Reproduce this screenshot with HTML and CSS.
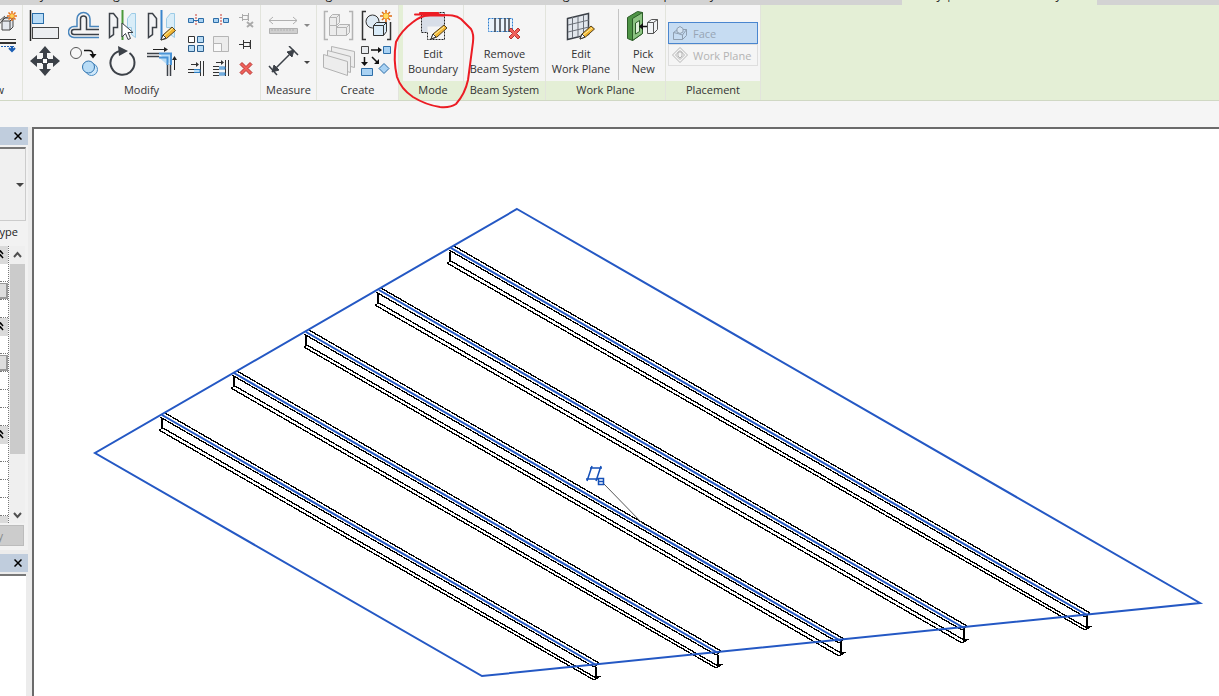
FILE: index.html
```html
<!DOCTYPE html>
<html lang="en">
<head>
    <meta charset="UTF-8">
    <meta name="viewport" content="width=device-width, initial-scale=1.0">
    <title>Modify | Structural Beam Systems</title>
    <link rel="stylesheet" href="styles.css">
</head>
<body>
    <!-- Ribbon tabs -->
    <nav class="tabs">
        <a href="#">Analyze</a>
        <a href="#">Massing &amp; Site</a>
        <a href="#">Collaborate</a>
        <a href="#">View</a>
        <a href="#">Manage</a>
        <a href="#">Add-Ins</a>
        <a href="#">Autodesk Tools</a>
        <a href="#">Site Designer</a>
        <a href="#">BIM Interoperability Tools</a>
        <a href="#" class="active">Modify | Structural Beam Systems</a>
    </nav>

    <!-- Ribbon -->
    <div class="ribbon">
        <section class="panel panel-view">
            <div class="panel-body">
                <div class="stack">
                    <button class="tool" aria-label="Override graphics">
                        <svg width="32" height="32" viewBox="0 0 32 32" fill="none">
                            <path d="M14 17l6-8 4-1M15 12l6-5" stroke="#555"/>
                            <path d="M18 12h8v9h-8zM26 12l3-3v9l-3 3M18 12l3-3h8" fill="#e4e8ee" stroke="#444"/>
                            <path d="M28 2v10M23 7h10M24.500 3.500l7 7M31.500 3.500l-7 7" stroke="#e8731a" stroke-width="1.500"/>
                            <circle cx="28" cy="7" r="2" fill="#ffd257"/>
                        </svg>
                    </button>
                    <button class="tool" aria-label="Linework">
                        <svg width="32" height="32" viewBox="0 0 32 32" fill="none">
                            <path d="M14 -6.500h18" stroke="#333"/>
                            <path d="M14 -3h18" stroke="#333" stroke-width="2"/>
                            <path d="M14 .5h16" stroke="#1c5fb5" stroke-dasharray="2 1"/>
                            <path d="M28 0v4M25 2l3 3 3-3" stroke="#1c5fb5" stroke-width="2"/>
                        </svg>
                    </button>
                </div>
            </div>
            <h2 class="panel-title">View</h2>
        </section>

        <section class="panel panel-modify">
            <div class="panel-body">
                <div class="tool-grid">
                    <button class="tool" aria-label="Align">
                        <svg width="32" height="32" viewBox="0 0 32 32" fill="none">
                            <path d="M1.500 1v31" stroke="#222" stroke-width="1.500"/>
                            <rect x="3.500" y="4.500" width="11" height="10" fill="#b9dcf7" stroke="#2a6da8"/>
                            <rect x="3.500" y="18.500" width="26" height="11" fill="#eceef1" stroke="#444"/>
                        </svg>
                    </button>
                    <button class="tool" aria-label="Offset">
                        <svg width="32" height="32" viewBox="0 0 32 32" fill="none">
                            <path d="M31 20.500H18.500V10a3 3 0 0 0-6 0v10.500H6a2.500 2.500 0 0 0 0 5h25" stroke="#3c4148" stroke-width="1.500"/>
                            <path d="M31 17.500H22V10a6.500 6.500 0 0 0-13 0v7.500H6a5.500 5.500 0 0 0 0 11h25" stroke="#4a86bd" stroke-width="1.500"/>
                        </svg>
                    </button>
                    <button class="tool" aria-label="Mirror - Pick Axis">
                        <svg width="32" height="32" viewBox="0 0 32 32" fill="none">
                            <path d="M2.500 4.500h4l4 5v9h-4v7l-4 3z" fill="#f3f4f6" stroke="#3c4148" stroke-width="1.500"/>
                            <path d="M28.500 4.500h-4l-4 5v9h4v7l4 3z" fill="#d9edf8" stroke="#9ccbe6"/>
                            <path d="M15.500 1v30" stroke="#4d9a3a" stroke-width="2"/>
                            <path d="M15 14v14l3.500-3.500 2.500 6 2.500-1-2.500-6h5z" fill="#fff" stroke="#3c4148"/>
                        </svg>
                    </button>
                    <button class="tool" aria-label="Mirror - Draw Axis">
                        <svg width="32" height="32" viewBox="0 0 32 32" fill="none">
                            <path d="M2.500 4.500h4l4 5v9h-4v7l-4 3z" fill="#f3f4f6" stroke="#3c4148" stroke-width="1.500"/>
                            <path d="M28.500 4.500h-4l-4 5v9h4v7l4 3z" fill="#d9edf8" stroke="#9ccbe6"/>
                            <path d="M15.500 1v30" stroke="#3a85cc" stroke-width="2"/>
                            <path d="M15 31l2-5 9-8 3.500 3.500-9 8z" fill="#f2b632" stroke="#53411f"/>
                            <path d="M15 31l2-5 3 3z" fill="#fff" stroke="#333"/>
                            <path d="M18 27l9-8" stroke="#fff2a8"/>
                        </svg>
                    </button>
                    <button class="tool" aria-label="Move">
                        <svg width="32" height="32" viewBox="0 0 32 32" fill="#3c4148">
                            <path d="M16 0l6 7h-4v5h-4V7h-4zM16 30l6-7h-4v-5h-4v5h-4zM1 15l7-6v4h5v4H8v4zM31 15l-7-6v4h-5v4h5v4z"/>
                            <rect x="13.500" y="12.500" width="5" height="5" fill="#fff" stroke="#3c4148"/>
                        </svg>
                    </button>
                    <button class="tool" aria-label="Copy">
                        <svg width="32" height="32" viewBox="0 0 32 32" fill="none">
                            <circle cx="8" cy="7" r="5.500" fill="#f7f7f7" stroke="#555"/>
                            <path d="M16 4.500h5q4 0 4 5" stroke="#111" stroke-width="1.500"/>
                            <path d="M21.500 8h7L25 12.500z" fill="#111"/>
                            <circle cx="23.500" cy="23.500" r="6" fill="#cfe8fa" stroke="#4c8dc4"/>
                            <circle cx="20.500" cy="21" r="6" fill="#b8dcf6" stroke="#2f72ad"/>
                        </svg>
                    </button>
                    <button class="tool" aria-label="Rotate">
                        <svg width="32" height="32" viewBox="0 0 32 32" fill="none">
                            <path d="M13 5a12 12 0 1 0 9.500 2" stroke="#3c4148" stroke-width="2"/>
                            <path d="M11 0l10 5-9 5z" fill="#3c4148"/>
                        </svg>
                    </button>
                    <button class="tool" aria-label="Trim/Extend to Corner">
                        <svg width="32" height="32" viewBox="0 0 32 32" fill="none">
                            <path d="M1 7.500h12M1 10.500h12M21.500 18v12M24.500 18v12" stroke="#3c4148" stroke-width="1.500"/>
                            <path d="M13 7.500h12V19M13 11.500h8.500V19" fill="#b8dcf6" stroke="#4a94d6" stroke-width="2"/>
                            <path d="M7 3.500h13M28.500 24V12" stroke="#222"/>
                            <path d="M18 1l4 2.500L18 6zM26 14l2.500-4 2.500 4z" fill="#222"/>
                        </svg>
                    </button>
                </div>
                <div class="small-grid">
                    <button class="tool-sm" aria-label="Split Element">
                        <svg width="16" height="16" viewBox="0 0 16 16" fill="none">
                            <path d="M.5 6.500h5v4h-5zM10.500 6.500h5v4h-5z" fill="#a9d2f3" stroke="#2d6ea8"/>
                            <path d="M8 2v12" stroke="#c83c33" stroke-dasharray="2 1"/>
                            <path d="M5 8.500h6" stroke="#2d6ea8"/>
                        </svg>
                    </button>
                    <button class="tool-sm" aria-label="Split with Gap">
                        <svg width="16" height="16" viewBox="0 0 16 16" fill="none">
                            <path d="M.5 6.500h5v4h-5zM10.500 6.500h5v4h-5z" fill="#a9d2f3" stroke="#2d6ea8"/>
                            <path d="M8 2v12" stroke="#c83c33" stroke-dasharray="2 1"/>
                        </svg>
                    </button>
                    <button class="tool-sm" aria-label="Unpin" disabled>
                        <svg width="16" height="16" viewBox="0 0 16 16" fill="none" stroke="#aaa">
                            <path d="M1 5.500h3M4.500 2v7M5 3.500h5v4H5M10.500 1v8"/>
                            <path d="M9 10l6 5M15 10l-6 5" stroke-width="2"/>
                        </svg>
                    </button>
                    <button class="tool-sm" aria-label="Array">
                        <svg width="16" height="16" viewBox="0 0 16 16" fill="#b8dcf6" stroke="#2d5f8c">
                            <path d="M.5.5h6v6h-6z" fill="#fff" stroke="#333"/>
                            <path d="M9.500.5h6v6h-6zM.5 9.500h6v6h-6zM9.500 9.500h6v6h-6z"/>
                        </svg>
                    </button>
                    <button class="tool-sm" aria-label="Scale" disabled>
                        <svg width="16" height="16" viewBox="0 0 16 16" fill="#ececec" stroke="#b5b5b5">
                            <path d="M.5.5h15v15H.5z"/>
                            <path d="M.5 7.500h8v8h-8z" fill="#f9f9f9"/>
                        </svg>
                    </button>
                    <button class="tool-sm" aria-label="Pin">
                        <svg width="16" height="16" viewBox="0 0 16 16" fill="none" stroke="#333">
                            <path d="M1 8.500h4M5.500 4v9M6 6.500h6v4H6M12.500 4v9"/>
                        </svg>
                    </button>
                    <button class="tool-sm" aria-label="Trim/Extend Single Element">
                        <svg width="16" height="16" viewBox="0 0 16 16" fill="none">
                            <path d="M12.500 1v15M15.500 1v15M0 9.500h6M0 12.500h6M3 4.500h6" stroke="#333"/>
                            <path d="M6 9.500h6v3H6" fill="#b8dcf6" stroke="#2f7fc4"/>
                            <path d="M8 2l3 2.500L8 7z" fill="#333"/>
                        </svg>
                    </button>
                    <button class="tool-sm" aria-label="Trim/Extend Multiple Elements">
                        <svg width="16" height="16" viewBox="0 0 16 16" fill="none">
                            <path d="M12.500 0v16M15.500 0v16M0 6.500h6M0 9.500h6M0 12.500h6M0 15.500h6M3 2.500h6" stroke="#333"/>
                            <path d="M6 7h6v2H6M6 13h6v2H6" fill="#b8dcf6" stroke="#2f7fc4"/>
                            <path d="M8 0l3 2.500L8 5z" fill="#333"/>
                        </svg>
                    </button>
                    <button class="tool-sm" aria-label="Delete">
                        <svg width="16" height="16" viewBox="0 0 16 16">
                            <path d="M2 4.500l2-2 4 4 4-4 2 2-4 4 4 4-2 2-4-4-4 4-2-2 4-4z" fill="#f0605a" stroke="#b8322e"/>
                        </svg>
                    </button>
                </div>
            </div>
            <h2 class="panel-title">Modify</h2>
        </section>

        <section class="panel panel-measure">
            <div class="panel-body">
                <div class="stack">
                    <button class="tool tool-drop" aria-label="Measure" disabled>
                        <svg width="32" height="32" viewBox="0 0 32 32" fill="none" stroke="#b0b0b0">
                            <path d="M2 11.500h28M6 8l-4 3.500L6 15M26 8l4 3.500-4 3.500"/>
                            <path d="M2.500 19.500h28v5h-28z" fill="#cfcfcf"/>
                            <path d="M5 20v2M8 20v2M11 20v2M14 20v2M17 20v2M20 20v2M23 20v2M26 20v2"/>
                        </svg>
                        <span class="caret"></span>
                    </button>
                    <button class="tool tool-drop" aria-label="Aligned Dimension">
                        <svg width="32" height="32" viewBox="0 0 32 32" fill="none" stroke="#3c4148">
                            <path d="M6 25L26 5M2 20l8 9M22 0l9 9" stroke-width="1.500"/>
                            <path d="M5 26l2-7 5 5zM27 4l-2 7-5-5z" fill="#3c4148"/>
                        </svg>
                        <span class="caret"></span>
                    </button>
                </div>
            </div>
            <h2 class="panel-title">Measure</h2>
        </section>

        <section class="panel panel-create">
            <div class="panel-body">
                <div class="tool-grid two">
                    <button class="tool" aria-label="Create Assembly" disabled>
                        <svg width="32" height="32" viewBox="0 0 32 32" fill="#ececec" stroke="#b3b3b3">
                            <path d="M5 2.500H1.500v28H5M26 2.500h3.500v28H26" fill="none" stroke-width="1.500"/>
                            <path d="M6.500 8.500l3-3h7v8l-3 3h-7zM6.500 16.500h7v10h-7zM13.500 18.500l3-3h10v8l-3 3h-10z"/>
                            <path d="M6.500 8.500h7v8M13.500 8.500l3-3M13.500 18.500h10v8M23.500 18.500l3-3" fill="none"/>
                        </svg>
                    </button>
                    <button class="tool" aria-label="Create Group">
                        <svg width="32" height="32" viewBox="0 0 32 32" fill="none" stroke="#333">
                            <path d="M5 2.500H1.500v28H5M26 30.500h3.500V13" stroke-width="1.500"/>
                            <circle cx="11.500" cy="12.500" r="6.500" fill="#dde9f3"/>
                            <path d="M12.500 16.500l3-3h10v9l-3 4h-10z" fill="#d9ebf8"/>
                            <path d="M12.500 16.500h10v10M22.500 16.500l3-3"/>
                            <path d="M25 1v12M19 7h12M21 3l8 8M29 3l-8 8" stroke="#df6b14" stroke-width="1.500"/>
                            <circle cx="25" cy="7" r="3" fill="#ffdc62" stroke="#f0972a"/>
                        </svg>
                    </button>
                    <button class="tool" aria-label="Create Parts" disabled>
                        <svg width="32" height="32" viewBox="0 0 32 32" fill="#ededed" stroke="#b3b3b3">
                            <path d="M8.500.5l23 5v16l-23-6z"/>
                            <path d="M4.500 4.500l23 6v16l-23-7z"/>
                            <path d="M.5 8.500l24 7v14l-24-8z"/>
                        </svg>
                    </button>
                    <button class="tool" aria-label="Create Similar">
                        <svg width="32" height="32" viewBox="0 0 32 32" fill="#a9d2f3" stroke="#2d6ea8">
                            <path d="M.5.500h7v7h-7z" fill="#e8ebee" stroke="#444"/>
                            <path d="M22.500.5h7v7h-7zM.5 22.500h11v7H.5zM23 17.500l5 5-5 5-5-5z"/>
                            <path d="M10 4h8M3.500 11v7M11 11l5 5" stroke="#111" stroke-width="1.500"/>
                            <path d="M17 1l4 3-4 3zM0 16h7l-3.500 4zM18 18v-5l-5 5z" fill="#111" stroke="none"/>
                        </svg>
                    </button>
                </div>
            </div>
            <h2 class="panel-title">Create</h2>
        </section>

        <!-- Contextual panels -->
        <div class="context">
            <section class="panel panel-mode">
                <div class="panel-body">
                    <button class="tool-lg">
                        <svg width="32" height="32" viewBox="0 0 32 32" fill="none">
                            <path d="M4.500 3.500h23v27h-17v-7h-6z" fill="#d8dee8"/>
                            <path d="M10.500 17.500h17v13h-17z" fill="#f5f5f5"/>
                            <path d="M4.500 3.500h23v27h-17v-7h-6z" stroke="#222" stroke-dasharray="2 1"/>
                            <path d="M14 30l2-5 11-9 3 3-10 9z" fill="#f2b632" stroke="#53411f"/>
                            <path d="M14 30l2-5 3 3z" fill="#fff" stroke="#333"/>
                            <path d="M17 26l10-8" stroke="#fff2a8"/>
                        </svg>
                        <span>Edit</span>
                        <span>Boundary</span>
                    </button>
                </div>
                <h2 class="panel-title">Mode</h2>
            </section>

            <section class="panel panel-beam">
                <div class="panel-body">
                    <button class="tool-lg">
                        <svg width="32" height="32" viewBox="0 0 32 32" fill="none">
                            <path d="M.5 9.500h24v13H.5z" fill="#eaf3fb" stroke="#2f7fd0" stroke-dasharray="2 1"/>
                            <path d="M7 9v14M12 9v14M17 9v14M21 9v14" stroke="#3c4148" stroke-width="1.500"/>
                            <path d="M21 21l2-2 3.500 3.500L30 19l2 2-3.500 3.500L32 28l-2 2-3.500-3.500L23 30l-2-2 3.500-3.500z" fill="#f0605a" stroke="#b8322e"/>
                        </svg>
                        <span>Remove</span>
                        <span>Beam System</span>
                    </button>
                </div>
                <h2 class="panel-title">Beam System</h2>
            </section>

            <section class="panel panel-plane">
                <div class="panel-body">
                    <button class="tool-lg">
                        <svg width="32" height="32" viewBox="0 0 32 32" fill="none">
                            <path d="M2.500 9.500l21-5v21l-21 5z" fill="#e1e6ec" stroke="#3c4148" stroke-width="1.500"/>
                            <path d="M7.500 8v21M13 7v21M18.500 6v21M3 16l21-5M3 23l21-5" stroke="#6b7078"/>
                            <path d="M15 30l2-5 9-8 3.500 3-9 8z" fill="#f2b632" stroke="#53411f"/>
                            <path d="M15 30l2-5 3 3z" fill="#fff" stroke="#333"/>
                            <path d="M18 26l9-7" stroke="#fff2a8"/>
                        </svg>
                        <span>Edit</span>
                        <span>Work Plane</span>
                    </button>
                    <span class="divider"></span>
                    <button class="tool-lg">
                        <svg width="32" height="32" viewBox="0 0 32 32" fill="none">
                            <path d="M.5 8.500l10-6 5 1v21l-10 7-5-2z" fill="#4e9446" stroke="#2c5c28"/>
                            <path d="M5.500 9.500l10-6v21l-10 7z" fill="#8cc382" stroke="#2c5c28"/>
                            <path d="M8.500 14l4-2.500v11L8.500 25z" fill="#dff0da" stroke="#2c5c28"/>
                            <path d="M13 17.500h7" stroke="#111" stroke-width="1.500"/>
                            <path d="M16 14l-4 3.500 4 3.500z" fill="#111"/>
                            <path d="M20.500 13.500l4-3h6v10l-4 4h-6z" fill="#f1f3f5" stroke="#555"/>
                            <path d="M20.500 13.500h6v11M26.500 13.500l4-3" stroke="#555"/>
                        </svg>
                        <span>Pick</span>
                        <span>New</span>
                    </button>
                </div>
                <h2 class="panel-title">Work Plane</h2>
            </section>

            <section class="panel panel-placement">
                <div class="panel-body">
                    <div class="placement">
                        <button class="option selected" disabled>
                            <svg width="16" height="16" viewBox="0 0 16 16" fill="none" stroke="#8f9fb0">
                                <path d="M1.500 7.500l4-3h9v6l-4 4h-9zM1.500 7.500q5 1 9 2.500v4.500M10.500 10l4-5.500"/>
                                <path d="M5 7V3.500l3-2 3 2V7L8 8.500z" fill="#d5e4f3"/>
                            </svg>
                            Face
                        </button>
                        <button class="option" disabled>
                            <svg width="16" height="16" viewBox="0 0 16 16" fill="none" stroke="#b5b5b5">
                                <path d="M8 .5L15.500 8 8 15.500.5 8z"/>
                                <path d="M8 3.500L12.500 8 8 12.500 3.500 8zM6 5h4v4L8 11 6 9z"/>
                            </svg>
                            Work Plane
                        </button>
                    </div>
                </div>
                <h2 class="panel-title">Placement</h2>
            </section>
        </div>

        <!-- Hand-drawn mark around Edit Boundary -->
        <svg class="redline" width="90" height="104" viewBox="390 8 90 104" fill="none" stroke="#ec1c24" stroke-width="2" stroke-linecap="round" stroke-linejoin="round">
            <path d="M415 14.500h25M420 13h18M424 15.500h20"/>
            <path d="M440 15C450 15 456 15 461 19L471 29Q474 34 473 42L470 65L468 80Q465 94 456 104Q450 108 440 107Q426 105 413 97Q401 89 397 77Q393 60 396 42Q401 31 413 22Q420 16 430 15"/>
        </svg>
    </div>

    <div class="options-bar"></div>

    <main class="workspace">
        <aside class="palettes">
            <!-- Properties -->
            <section class="properties">
                <div class="palette-title">
                    <button class="close" aria-label="Close Properties">
                        <svg width="8" height="8" viewBox="0 0 8 8" stroke="#000" stroke-width="1.500"><path d="M.5.5l7 7M7.500.5l-7 7"/></svg>
                    </button>
                </div>
                <button class="type-selector" aria-label="Type Selector"><span class="caret"></span></button>
                <div class="edit-type"><a href="#">Edit Type</a></div>
                <div class="property-list">
                    <div class="rows">
                        <div class="row head"><svg width="6" height="9" viewBox="0 0 6 9" fill="none" stroke="#000" stroke-width="1.500"><path d="M-2 4L.5 1 3 4M-2 8L.5 5 3 8"/></svg></div>
                        <div class="row"></div>
                        <div class="row"><span class="cell-button"></span></div>
                        <div class="row"></div>
                        <div class="row head"><svg width="6" height="9" viewBox="0 0 6 9" fill="none" stroke="#000" stroke-width="1.500"><path d="M-2 4L.5 1 3 4M-2 8L.5 5 3 8"/></svg></div>
                        <div class="row"></div>
                        <div class="row"><span class="cell-button"></span></div>
                        <div class="row"></div>
                        <div class="row"></div>
                        <div class="row"></div>
                        <div class="row head"><svg width="6" height="9" viewBox="0 0 6 9" fill="none" stroke="#000" stroke-width="1.500"><path d="M-2 4L.5 1 3 4M-2 8L.5 5 3 8"/></svg></div>
                        <div class="row"></div>
                        <div class="row"></div>
                        <div class="row"></div>
                        <div class="row"></div>
                        <div class="row head"></div>
                    </div>
                    <div class="scrollbar">
                        <svg width="15" height="18" viewBox="0 0 15 18" fill="none" stroke="#505050" stroke-width="2"><path d="M4 11l3.500-4 3.500 4"/></svg>
                        <div class="track"><div class="thumb"></div></div>
                        <svg width="15" height="18" viewBox="0 0 15 18" fill="none" stroke="#505050" stroke-width="2"><path d="M4 8l3.500 4L11 8"/></svg>
                    </div>
                </div>
                <button class="apply" disabled>Apply</button>
            </section>

            <!-- Project Browser -->
            <section class="browser">
                <div class="palette-title">
                    <button class="close" aria-label="Close Project Browser">
                        <svg width="8" height="8" viewBox="0 0 8 8" stroke="#000" stroke-width="1.500"><path d="M.5.5l7 7M7.500.5l-7 7"/></svg>
                    </button>
                </div>
                <div class="browser-tree"></div>
            </section>
        </aside>

        <!-- 3D view -->
        <div class="view">
            <svg class="model" viewBox="34 129 1185 567" fill="none">
                <g class="beam">
                    <path d="M454 246l636 367M449 250l636 367M447 263l638 367 5-3h-3M451 261l636 367M447 263l4-2M450 252v9M1087 616v12M1085 617l5-4"/>
                    <path d="M381 288l586 338M376 292l586 338M375 305l587 338 5-3h-3M379 303l585 337M375 305l4-2M378 294v9M964 629v12M962 630l5-4"/>
                    <path d="M309 330l535 309M304 334l535 309M304 347l535 309 5-3h-3M307 345l534 308M304 347l3-2M306 336v9M841 642v12M839 643l5-4"/>
                    <path d="M237 371l484 280M232 375l484 280M231 388l485 280 5-3h-3M235 386l483 280M231 388l4-2M234 377v9M718 655v11M716 655l5-4"/>
                    <path d="M165 413l434 250M160 417l434 250M159 430l435 250 5-3h-3M163 428l433 250M159 430l4-2M162 419v10M596 667v11M594 667l5-4"/>
                </g>
                <g class="centerline">
                    <path d="M451 248l636 367M379 290l585 338M306 332l535 309M234 373l484 280M162 415l434 250"/>
                </g>
                <path class="boundary" d="M517 209L1200 603 482 676 95 453z"/>
                <path class="leader" d="M604 484l39 40"/>
                <g class="tag">
                    <path d="M590 468h12M586 479h12M592 466l-5 15M601 466l-5 15"/>
                    <path d="M598.500 478.500h5v6h-5zM598 481.500h6"/>
                </g>
            </svg>
        </div>
    </main>
</body>
</html>
```
FILE: styles.css
```css
/* General */
* {
    box-sizing: border-box;
}

body {
    margin: 0;
    height: 100vh;
    display: flex;
    flex-direction: column;
    overflow: hidden;
    background-color: #f5f5f5;
    color: #333;
    font-family: "Open Sans", "Noto Sans", sans-serif;
    font-size: 11px;
    line-height: 15px;
}

button {
    padding: 0;
    border: 0;
    background: none;
    color: inherit;
    font: inherit;
}

svg {
    display: block;
    flex: none;
}

/* Tabs */
.tabs {
    display: flex;
    align-items: flex-end;
    flex: none;
    height: 5px;
    padding-left: 7px;
    overflow: hidden;
    background-color: #d3d3d3;
    font-size: 12px;
}

.tabs a {
    flex: none;
    padding: 0 8px 3px;
    color: #222;
    text-decoration: none;
}

.tabs .active {
    width: 195px;
    margin-left: auto;
    margin-right: 122px;
    padding: 0 0 3px;
    text-align: center;
    background-color: #e4efd6;
}

/* Ribbon */
.ribbon {
    position: relative;
    display: flex;
    flex: none;
    height: 96px;
    border-bottom: 1px solid #d0d8c4;
}

.panel {
    display: flex;
    flex-direction: column;
    flex: none;
    border-right: 1px solid #e2e4dc;
    background-color: #f5f5f5;
}

.panel-body {
    display: flex;
    flex: 1;
    padding-top: 4px;
}

.panel-title {
    margin: 0;
    height: 19px;
    font-size: 11px;
    font-weight: normal;
    line-height: 18px;
    text-align: center;
    white-space: nowrap;
}

.panel-view {
    width: 23px;
    align-items: flex-end;
    overflow: hidden;
}

.panel-view .panel-title {
    padding-right: 18px;
}

.panel-view .stack {
    margin-right: 6px;
}

.panel-view svg {
    overflow: visible;
}

.panel-modify {
    width: 238px;
}

.panel-modify .panel-body {
    gap: 10px;
    padding-left: 6px;
}

.panel-measure {
    width: 56px;
}

.panel-measure .panel-body {
    padding-left: 6px;
}

.panel-create {
    width: 82px;
}

.panel-create .panel-body {
    padding-left: 6px;
}

.stack {
    display: flex;
    flex-direction: column;
    gap: 5px;
}

.tool-grid {
    display: grid;
    grid-template-columns: repeat(4, 32px);
    grid-auto-rows: 32px;
    gap: 5px 7px;
}

.tool-grid.two {
    grid-template-columns: repeat(2, 32px);
    column-gap: 6px;
}

.small-grid {
    display: grid;
    grid-template-columns: repeat(3, 16px);
    grid-auto-rows: 16px;
    gap: 8px 9px;
    padding-top: 3px;
}

.tool-drop {
    display: flex;
    align-items: center;
    gap: 5px;
}

.caret {
    border: 3px solid transparent;
    border-top-color: #444;
    border-bottom: 0;
}

.tool-drop:disabled .caret {
    border-top-color: #888;
}

/* Contextual part of the ribbon */
.context {
    display: flex;
    flex: 1;
    padding-left: 4px;
    background-color: #e4efd6;
}

.context .panel-title {
    background-color: #e4efd6;
}

.context .panel-body {
    justify-content: center;
}

.panel-mode {
    width: 61px;
}

.panel-beam {
    width: 82px;
}

.panel-plane {
    width: 120px;
}

.panel-placement {
    width: 95px;
}

.tool-lg {
    display: flex;
    flex-direction: column;
    align-items: center;
    white-space: nowrap;
}

.tool-lg svg {
    margin-bottom: 5px;
}

.divider {
    width: 1px;
    height: 71px;
    margin: 0 8px;
    background-color: #c4c4c4;
}

.placement {
    width: 90px;
    padding-top: 13px;
}

.option {
    display: flex;
    align-items: center;
    gap: 5px;
    width: 100%;
    height: 22px;
    padding-left: 3px;
    border: 1px solid #dedede;
    color: #b3b3b3;
    white-space: nowrap;
}

.option.selected {
    border-color: #4a86cf;
    background-color: #c6dcf2;
    color: #97a5b5;
}

.redline {
    position: absolute;
    left: 390px;
    top: 3px;
    pointer-events: none;
}

.options-bar {
    flex: none;
    height: 26px;
}

/* Palettes */
.workspace {
    display: flex;
    flex: 1;
    min-height: 0;
}

.palettes {
    display: flex;
    flex-direction: column;
    flex: none;
    width: 32px;
    padding-right: 4px;
    background-color: #ececec;
}

.properties {
    height: 423px;
    background-color: #f2f2f2;
}

.palette-title {
    display: flex;
    align-items: center;
    justify-content: flex-end;
    height: 18px;
    padding-right: 6px;
    background-color: #c0cddd;
}

.type-selector {
    display: flex;
    align-items: center;
    justify-content: flex-end;
    width: 26px;
    height: 74px;
    margin-top: 2px;
    padding-right: 1px;
    border: solid #ccc;
    border-width: 2px 1px 1px 0;
    border-top-color: #777;
    background-color: #f0f0f0;
}

.type-selector .caret {
    border-width: 4px 4px 0;
}

.edit-type {
    display: flex;
    justify-content: flex-end;
    height: 25px;
    padding: 3px 10px 0 0;
    overflow: hidden;
    white-space: nowrap;
}

.edit-type a {
    color: #222;
    text-decoration: none;
}

.property-list {
    display: flex;
    width: 26px;
    height: 277px;
    overflow: hidden;
}

.rows {
    width: 9px;
    border-right: 1px dotted #777;
    background-color: #fff;
}

.row {
    display: flex;
    align-items: center;
    height: 18px;
    border-bottom: 1px dotted #777;
}

.row.head {
    border-bottom-color: #dadada;
    background-color: #dadada;
}

.cell-button {
    width: 8px;
    height: 16px;
    border: solid #999;
    border-width: 1px 2px 2px 0;
    background-color: #ddd;
}

.scrollbar {
    display: flex;
    flex-direction: column;
    width: 15px;
    margin-left: 1px;
    background-color: #efefef;
}

.track {
    flex: 1;
}

.thumb {
    height: 79%;
    background-color: #cbcbcb;
}

.apply {
    display: flex;
    align-items: center;
    justify-content: flex-end;
    width: 24px;
    height: 21px;
    margin-top: 2px;
    padding-right: 20px;
    overflow: hidden;
    border: solid #bcbcbc;
    border-width: 1px 1px 1px 0;
    background-color: #ccc;
    color: #888;
}

.browser {
    display: flex;
    flex-direction: column;
    flex: 1;
    margin-top: 4px;
}

.browser-tree {
    flex: 1;
    width: 26px;
    margin-top: 2px;
    border-top: 2px solid #777;
    background-color: #fff;
}

/* 3D view */
.view {
    flex: 1;
    min-width: 0;
    overflow: hidden;
    border: solid #6b6b6b;
    border-width: 2px 0 0 2px;
    background-color: #fff;
}

.model {
    width: 100%;
}

.beam {
    stroke: #000;
    stroke-width: 1.3;
    shape-rendering: crispEdges;
}

.centerline,
.boundary {
    stroke: #2458c4;
    stroke-width: 2;
}

.leader {
    stroke: #555;
}

.tag {
    stroke: #1450b8;
    stroke-width: 1.5;
}
```
